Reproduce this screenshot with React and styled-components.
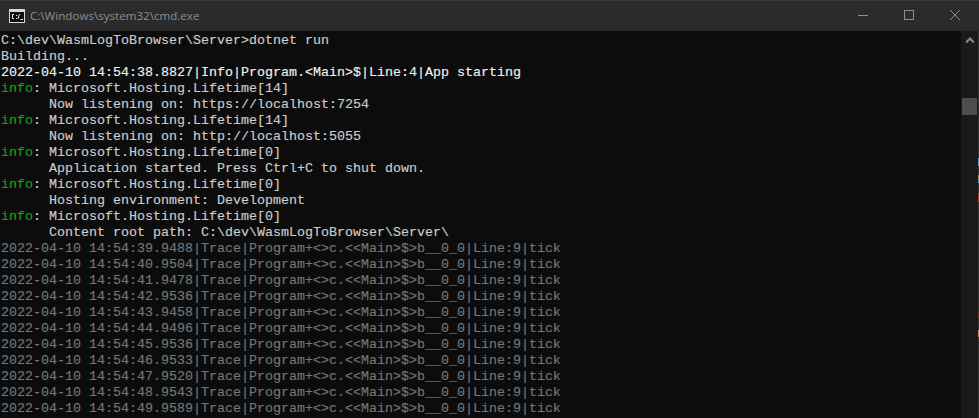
import styled, { createGlobalStyle } from "styled-components";

const Global = createGlobalStyle`
html, body {
  margin: 0;
  padding: 0;
  background: #0c0c0c;
  overflow: hidden;
}
`;

const Window = styled.div`
width: 979px;
height: 418px;
display: flex;
flex-direction: column;
overflow: hidden;
background: #0c0c0c;
`;
const TitleBar = styled.div`
height: 31px;
flex: none;
display: flex;
align-items: center;
padding-right: 1px;
background: #2b2b2b;
border-top: 1px solid #3a3a3a;
box-sizing: border-box;
`;
const AppIcon = styled.svg`
width: 16px;
height: 14px;
margin-left: 9px;
flex: none;
`;
const Title = styled.div`
margin-left: 5px;
padding-bottom: 1px;
font-family: "Open Sans", "Liberation Sans", sans-serif;
font-size: 11.6px;
color: #8f8f8f;
flex: 1;
`;
const WinButton = styled.div`
width: 46px;
height: 30px;
padding-bottom: 2px;
box-sizing: border-box;
display: flex;
align-items: center;
justify-content: center;
`;
const Body = styled.div`
flex: 1;
display: flex;
min-height: 0;
`;
const Console = styled.div`
flex: 1;
overflow: hidden;
padding: 2px 0 0 1px;
font-family: "Liberation Mono", monospace;
font-size: 13.33px;
line-height: 16px;
-webkit-text-stroke: 0.15px;
color: #cccccc;
white-space: pre;
`;
const Line = styled.div`
height: 16px;
color: ${(p) => p.$color || "#cccccc"};
`;
const Green = styled.span`
color: #13a10e;
`;
const Scrollbar = styled.div`
width: 17px;
flex: none;
background: #1a1a1a;
display: flex;
flex-direction: column;
align-items: center;
`;
const ArrowUp = styled.svg`
width: 8px;
height: 6px;
margin-top: 6px;
`;
const Thumb = styled.div`
width: 15px;
height: 17px;
margin-top: 55px;
background: #4d4d4d;
`;
// one pixel of window frame, the desktop shows through it in a few spots
const Edge = styled.div`
width: 1px;
flex: none;
background: linear-gradient(
  to bottom,
  #333333 127px,
  #6f8fa8 127px, #6f8fa8 135px,
  #333333 135px, #333333 144px,
  #b08a4a 144px, #5f8fb0 152px,
  #333333 152px, #333333 162px,
  #9c3f3f 162px, #9c3f3f 171px,
  #333333 171px, #333333 281px,
  #6a3030 281px, #6a3030 288px,
  #333333 288px, #333333 299px,
  #a89468 299px, #a89468 306px,
  #333333 306px
);
`;

const ticks = [
  "39.9488", "40.9504", "41.9478", "42.9536", "43.9458", "44.9496",
  "45.9536", "46.9533", "47.9520", "48.9543", "49.9589",
];

const Info = ({ source, children }) => (
  <>
    <Line><Green>info</Green>: {source}</Line>
    <Line>      {children}</Line>
  </>
);

export default function App() {
  return (
    <Window>
      <Global />
      <TitleBar>
        <AppIcon viewBox="0 0 16 14">
          <rect x="0" y="0" width="16" height="14" fill="#d8d8d8" />
          <rect x="1" y="3" width="14" height="10" fill="#0c0c0c" />
          <path d="M5 5.5H3.5V9.5H5M7.5 6v1M7.5 9v1M10.5 5L9 10M11.5 10.5H14" stroke="#f2f2f2" strokeWidth="1" fill="none" />
        </AppIcon>
        <Title>C:\Windows\system32\cmd.exe</Title>
        <WinButton>
          <svg width="10" height="10" viewBox="0 0 10 10"><path d="M0 5.5h10" stroke="#8f8f8f" /></svg>
        </WinButton>
        <WinButton>
          <svg width="10" height="10" viewBox="0 0 10 10"><rect x="0.5" y="0.5" width="9" height="9" fill="none" stroke="#8f8f8f" /></svg>
        </WinButton>
        <WinButton>
          <svg width="10" height="10" viewBox="0 0 10 10"><path d="M0 0l10 10M10 0L0 10" stroke="#8f8f8f" /></svg>
        </WinButton>
      </TitleBar>
      <Body>
        <Console>
          <Line>C:\dev\WasmLogToBrowser\Server&gt;dotnet run</Line>
          <Line>Building...</Line>
          <Line $color="#f2f2f2">2022-04-10 14:54:38.8827|Info|Program.&lt;Main&gt;$|Line:4|App starting</Line>
          <Info source="Microsoft.Hosting.Lifetime[14]">Now listening on: https://localhost:7254</Info>
          <Info source="Microsoft.Hosting.Lifetime[14]">Now listening on: http://localhost:5055</Info>
          <Info source="Microsoft.Hosting.Lifetime[0]">Application started. Press Ctrl+C to shut down.</Info>
          <Info source="Microsoft.Hosting.Lifetime[0]">Hosting environment: Development</Info>
          <Info source="Microsoft.Hosting.Lifetime[0]">Content root path: C:\dev\WasmLogToBrowser\Server\</Info>
          {ticks.map((t) => (
            <Line key={t} $color="#767676">
              {`2022-04-10 14:54:${t}|Trace|Program+<>c.<<Main>$>b__0_0|Line:9|tick`}
            </Line>
          ))}
        </Console>
        <Scrollbar>
          <ArrowUp viewBox="0 0 8 6">
            <path d="M0 5.5L4 1.5L8 5.5" fill="none" stroke="#8a8a8a" strokeWidth="2.2" />
          </ArrowUp>
          <Thumb />
        </Scrollbar>
        <Edge />
      </Body>
    </Window>
  );
}
